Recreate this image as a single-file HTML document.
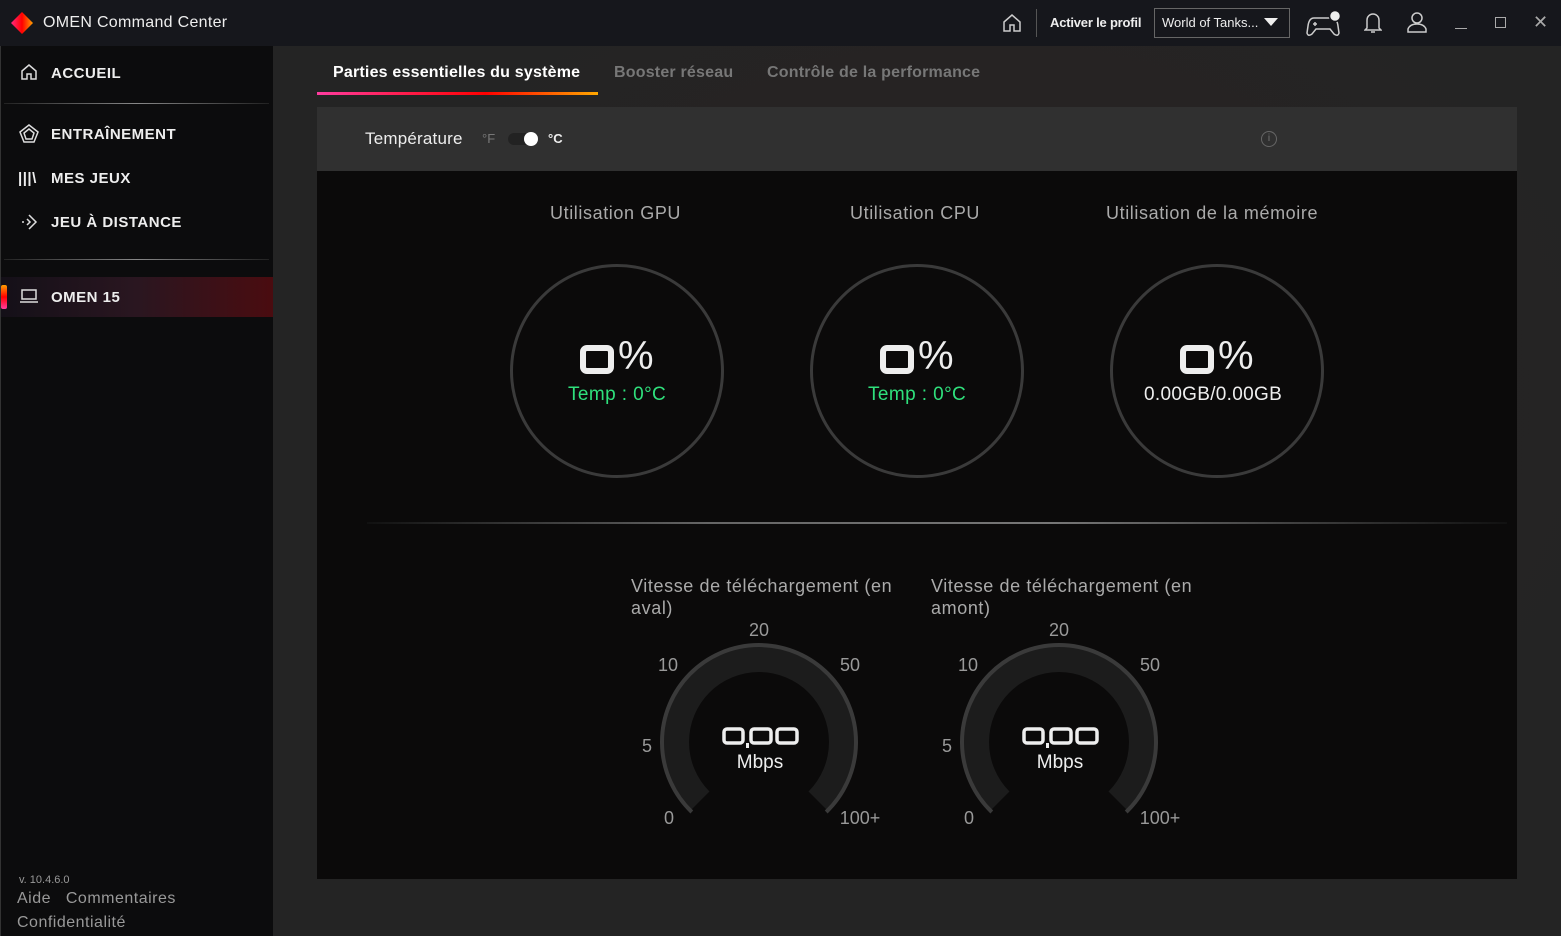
<!DOCTYPE html>
<html><head><meta charset="utf-8"><style>
*{margin:0;padding:0;box-sizing:border-box}
body{width:1561px;height:936px;overflow:hidden;background:#252525;font-family:"Liberation Sans",sans-serif;color:#eee;position:relative}
.title{position:absolute;left:0;top:0;width:1561px;height:46px;background:#16171c}
.side{position:absolute;left:0;top:46px;width:273px;height:890px;background:#0c0c0d;border-left:1px solid #333}
.main{position:absolute;left:273px;top:46px;width:1288px;height:890px;background:radial-gradient(ellipse at 55% 40%,#2e2424 0%,#262323 40%,#242424 70%)}
.abs{position:absolute;white-space:nowrap}
.nav{font-weight:bold;font-size:15px;color:#eee;letter-spacing:.5px}
.sep{position:absolute;left:4px;width:265px;height:1px;background:linear-gradient(90deg,#222,#888 50%,#222)}
.panel{position:absolute;left:317px;top:171px;width:1200px;height:708px;background:#0b0a0a}
.tbar{position:absolute;left:317px;top:107px;width:1200px;height:64px;background:#303030}
.ring{position:absolute;width:214px;height:214px;border:3px solid #3a3a3a;border-radius:50%}
.zero{position:absolute;width:34px;height:29px;border:6px solid #eee;border-radius:7px}
.pct{font-size:40px;color:#eee}
.g{color:#2fe07c;font-size:19px;letter-spacing:.4px}
.lbl{font-size:18px;color:#aaa;letter-spacing:.6px}
</style></head><body>
<div class="title"></div>
<svg class="abs" style="left:10px;top:11px" width="24" height="24"><defs><linearGradient id="lg" x1="0" x2="1"><stop offset="0" stop-color="#ff2a80"/><stop offset=".5" stop-color="#f00"/><stop offset="1" stop-color="#ffa000"/></linearGradient></defs><path d="M12 1L23 12 12 23 1 12Z" fill="url(#lg)"/></svg>
<div class="abs" style="left:43px;top:14px;font-size:16px;color:#eee;letter-spacing:.3px">OMEN Command Center</div>
<svg class="abs" style="left:1002px;top:13px" width="20" height="20" fill="none" stroke="#ccc" stroke-width="1.5"><path d="M2 9L10 2 18 9V18H12V12H8V18H2Z"/></svg>
<div class="abs" style="left:1036px;top:9px;width:1px;height:28px;background:#555"></div>
<div class="abs" style="left:1050px;top:15px;font-size:13px;font-weight:bold;color:#eee;letter-spacing:-.2px">Activer le profil</div>
<div class="abs" style="left:1154px;top:8px;width:136px;height:30px;border:1px solid #666"></div>
<div class="abs" style="left:1162px;top:15px;font-size:13px;color:#eee">World of Tanks...</div>
<svg class="abs" style="left:1264px;top:18px" width="14" height="9"><path d="M0 0H14L7 8Z" fill="#eee"/></svg>
<svg class="abs" style="left:1306px;top:8px" width="38" height="30" fill="none" stroke="#ccc" stroke-width="1.5"><path d="M8 10H26Q31 10 32 18L33 25Q32 29 28 26L24 21H10L6 26Q2 29 1 25L2 18Q3 10 8 10Z"/><path d="M7 16H11M9 14V18"/><circle cx="29" cy="8" r="5.5" fill="#eee" stroke="#16171c"/></svg>
<svg class="abs" style="left:1364px;top:12px" width="18" height="22" fill="none" stroke="#ccc" stroke-width="1.5"><path d="M3 16V8A6 6 0 0 1 15 8V16L17 18H1Z M7 20H11"/></svg>
<svg class="abs" style="left:1406px;top:11px" width="22" height="22" fill="none" stroke="#ccc" stroke-width="1.5"><circle cx="11" cy="7" r="5"/><path d="M2 21V18Q4 13 11 13Q18 13 20 18V21Z"/></svg>
<div class="abs" style="left:1455px;top:28px;width:12px;height:1px;background:#aaa"></div>
<div class="abs" style="left:1495px;top:17px;width:11px;height:11px;border:1px solid #aaa"></div>
<div class="abs" style="left:1533px;top:12px;font-size:18px;color:#aaa">✕</div>

<div class="side"></div>
<svg class="abs" style="left:20px;top:63px" width="18" height="18" fill="none" stroke="#ddd" stroke-width="1.5"><path d="M2 8L9 2 16 8V16H11V11H7V16H2Z"/></svg>
<div class="abs nav" style="left:51px;top:65px">ACCUEIL</div>
<div class="sep" style="top:103px"></div>
<svg class="abs" style="left:19px;top:124px" width="20" height="20" fill="none" stroke="#ddd" stroke-width="1.5"><path d="M10 1L19 8 15 18H5L1 8Z"/><path d="M10 5L15 9 13 15H7L5 9Z"/></svg>
<div class="abs nav" style="left:51px;top:126px">ENTRAÎNEMENT</div>
<div class="abs nav" style="left:18px;top:170px">|||\</div>
<div class="abs nav" style="left:51px;top:170px">MES JEUX</div>
<svg class="abs" style="left:19px;top:212px" width="20" height="20" fill="none" stroke="#ddd" stroke-width="1.5"><path d="M10 3L17 10 10 17M8 7L11 10 8 13M4 9V11"/></svg>
<div class="abs nav" style="left:51px;top:214px">JEU À DISTANCE</div>
<div class="sep" style="top:259px"></div>
<div class="abs" style="left:1px;top:277px;width:272px;height:40px;background:linear-gradient(90deg,#141018,#2a1620 50%,#4a0c10)"></div>
<div class="abs" style="left:1px;top:285px;width:6px;height:24px;border-radius:2px;background:linear-gradient(#ffa000,#f00,#ff3ca0)"></div>
<svg class="abs" style="left:19px;top:288px" width="20" height="16" fill="none" stroke="#ddd" stroke-width="1.5"><rect x="3" y="2" width="14" height="9"/><path d="M1 14H19"/></svg>
<div class="abs nav" style="left:51px;top:289px">OMEN 15</div>
<div class="abs" style="left:19px;top:874px;font-size:11px;color:#999">v. 10.4.6.0</div>
<div class="abs" style="left:17px;top:890px;font-size:16px;color:#999;letter-spacing:.5px">Aide &nbsp;&nbsp;Commentaires</div>
<div class="abs" style="left:17px;top:914px;font-size:16px;color:#999;letter-spacing:.5px">Confidentialité</div>

<div class="main"></div>
<div class="abs" style="left:333px;top:64px;font-size:16px;font-weight:bold;color:#fff;letter-spacing:.2px">Parties essentielles du système</div>
<div class="abs" style="left:614px;top:64px;font-size:16px;font-weight:bold;color:#777;letter-spacing:.2px">Booster réseau</div>
<div class="abs" style="left:767px;top:64px;font-size:16px;font-weight:bold;color:#777;letter-spacing:.2px">Contrôle de la performance</div>
<div class="abs" style="left:317px;top:92px;width:281px;height:3px;background:linear-gradient(90deg,#ff3ca0,#f00 60%,#ffa800)"></div>
<div class="tbar"></div>
<div class="abs" style="left:365px;top:129px;font-size:17px;color:#eee;letter-spacing:.2px">Température</div>
<div class="abs" style="left:482px;top:131px;font-size:13px;color:#777">°F</div>
<div class="abs" style="left:508px;top:133px;width:28px;height:12px;border-radius:6px;background:#222"></div>
<div class="abs" style="left:524px;top:132px;width:14px;height:14px;border-radius:50%;background:#fff"></div>
<div class="abs" style="left:548px;top:131px;font-size:13px;font-weight:bold;color:#eee">°C</div>
<div class="abs" style="left:1261px;top:131px;width:16px;height:16px;border:1px solid #666;border-radius:50%;font-size:10px;color:#777;text-align:center;line-height:14px">i</div>
<div class="panel"></div>

<div class="abs lbl" style="left:550px;top:203px">Utilisation GPU</div>
<div class="abs lbl" style="left:850px;top:203px">Utilisation CPU</div>
<div class="abs lbl" style="left:1106px;top:203px">Utilisation de la mémoire</div>

<div class="ring" style="left:510px;top:264px"></div>
<div class="zero" style="left:580px;top:345px"></div><div class="abs pct" style="left:618px;top:334px">%</div>
<div class="abs g" style="left:568px;top:384px">Temp : 0°C</div>
<div class="ring" style="left:810px;top:264px"></div>
<div class="zero" style="left:880px;top:345px"></div><div class="abs pct" style="left:918px;top:334px">%</div>
<div class="abs g" style="left:868px;top:384px">Temp : 0°C</div>
<div class="ring" style="left:1110px;top:264px"></div>
<div class="zero" style="left:1180px;top:345px"></div><div class="abs pct" style="left:1218px;top:334px">%</div>
<div class="abs" style="left:1144px;top:384px;font-size:19px;color:#eee;letter-spacing:.3px">0.00GB/0.00GB</div>

<div class="abs" style="left:367px;top:522px;width:1140px;height:2px;background:linear-gradient(90deg,#111,#666 30%,#777 60%,#111)"></div>

<div class="abs lbl" style="left:631px;top:575px;line-height:22px">Vitesse de téléchargement (en<br>aval)</div>
<div class="abs lbl" style="left:931px;top:575px;line-height:22px">Vitesse de téléchargement (en<br>amont)</div>

<svg class="abs" style="left:620px;top:620px" width="600" height="220">
<g id="gg" transform="translate(139,122)">
<path d="M-68.6 68.6A97 97 0 1 1 68.6 68.6L49.5 49.5A70 70 0 1 0 -49.5 49.5Z" fill="#1c1c1c"/>
<path d="M-67.2 70A97 97 0 1 1 67.2 70" fill="none" stroke="#3a3a3a" stroke-width="4"/>
<text x="0" y="-106" text-anchor="middle" font-size="18" fill="#999" font-family="Liberation Sans">20</text>
<text x="-91" y="-71" text-anchor="middle" font-size="18" fill="#999" font-family="Liberation Sans">10</text>
<text x="91" y="-71" text-anchor="middle" font-size="18" fill="#999" font-family="Liberation Sans">50</text>
<text x="-112" y="10" text-anchor="middle" font-size="18" fill="#999" font-family="Liberation Sans">5</text>
<text x="-90" y="82" text-anchor="middle" font-size="18" fill="#999" font-family="Liberation Sans">0</text>
<text x="101" y="82" text-anchor="middle" font-size="18" fill="#999" font-family="Liberation Sans">100+</text>
<g fill="none" stroke="#eee" stroke-width="3.5"><rect x="-35" y="-13" width="19" height="14" rx="3"/><rect x="-8" y="-13" width="20" height="14" rx="3"/><rect x="18" y="-13" width="20" height="14" rx="3"/></g>
<rect x="-13" y="1" width="3" height="5" fill="#eee"/>
<text x="1" y="26" text-anchor="middle" font-size="19" fill="#eee" font-family="Liberation Sans">Mbps</text>
</g>
<use href="#gg" x="300"/>
</svg>
</body></html>
